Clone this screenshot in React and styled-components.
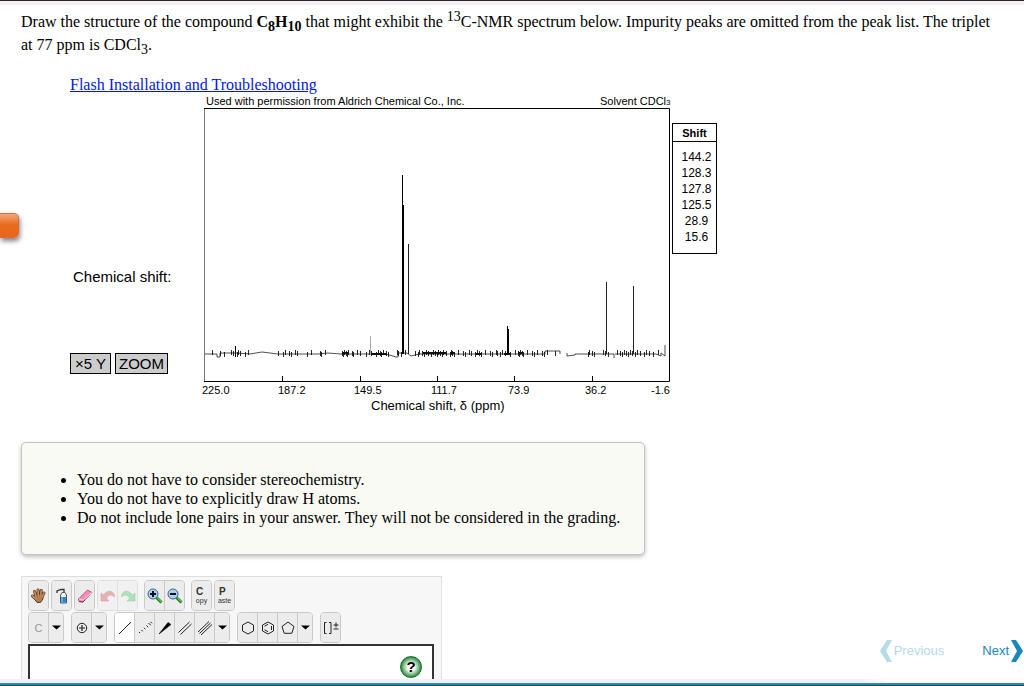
import React from 'react';
import styled, { createGlobalStyle } from 'styled-components';

const GlobalStyle = createGlobalStyle`
  * {
    box-sizing: border-box;
  }

  body {
    margin: 0;
    background-color: #fff;
    color: #000;
    font-family: 'Liberation Serif', 'Times New Roman', serif;
    font-size: 16px;
  }

  button {
    font-family: 'Liberation Sans', Arial, sans-serif;
    padding: 0;
  }
`;

const Page = styled.div`
  height: 100vh;
  display: flex;
  flex-direction: column;
  overflow: hidden;
  position: relative;
`;

const TopStrip = styled.div`
  flex: none;
  height: 5px;
  background-color: #f3eff3;
  border-top: 1px solid #2c262b;
`;

const BottomStrip = styled.div`
  flex: none;
  height: 7px;
  background: linear-gradient(90deg, #f1f1f1 84%, #fff 87%);
  border-bottom: 1px solid #3b3f42;

  &::after {
    content: '';
    display: block;
    margin-top: 4px;
    height: 2px;
    background-color: #1a8cc8;
  }
`;

const Main = styled.main`
  flex: 1;
  min-height: 0;
  display: flex;
  flex-direction: column;
  overflow: hidden;
`;

const Question = styled.p`
  margin: 5px 0 19px;
  padding: 0 20px 0 21px;
  line-height: 23px;

  sub,
  sup {
    font-size: 14px;
    line-height: 0;
  }
`;

const Applet = styled.section`
  padding-left: 70px;
`;

const HelpLink = styled.a`
  display: block;
  width: fit-content;
  color: #0019e6;
  line-height: 20px;
`;

const Spectrum = styled.div`
  display: flex;
  align-items: flex-start;
`;

const Controls = styled.div`
  width: 130px;
  flex: none;
  padding-top: 172px;
`;

const ControlsLabel = styled.div`
  font-family: 'Liberation Sans', Arial, sans-serif;
  font-size: 15px;
  line-height: 20px;
  padding-left: 3px;
  margin-bottom: 66px;
`;

const ControlsRow = styled.div`
  display: flex;
  gap: 4px;
`;

const GreyButton = styled.button`
  height: 21px;
  min-width: 41px;
  padding: 0 3px;
  font-size: 15px;
  line-height: 19px;
  color: #000;
  background-color: #ccc;
  border: 1px solid #000;
  border-radius: 0;
  white-space: nowrap;
`;

const Chart = styled.svg`
  display: block;
  flex: none;
  font-family: 'Liberation Sans', Arial, sans-serif;
  font-size: 11px;
`;

const ShiftTable = styled.table`
  width: 45px;
  margin-top: 28px;
  border: 1px solid #000;
  border-collapse: collapse;
  font-family: 'Liberation Sans', Arial, sans-serif;
  font-size: 12px;
  text-align: center;

  th {
    height: 18px;
    padding: 0;
    font-size: 11px;
    border-bottom: 1px solid #000;
  }

  td {
    padding: 0 0 0 4px;
    line-height: 16px;
  }

  tbody tr:first-child td {
    padding-top: 7px;
  }

  tbody tr:last-child td {
    padding-bottom: 8px;
  }
`;

const Notes = styled.ul`
  width: fit-content;
  margin: 27px 0 21px 21px;
  padding: 27px 24px 27px 55px;
  line-height: 19px;
  background-color: #f9faf4;
  border: 1px solid #c4c4c4;
  border-radius: 5px;
  box-shadow: 0 2px 4px rgba(0, 0, 0, 0.25);
`;

const BottomRow = styled.div`
  flex: 1;
  min-height: 0;
  display: flex;
  justify-content: space-between;
`;

const Sketcher = styled.section`
  width: 421px;
  margin-left: 21px;
  padding: 3px 7px 0 6px;
  display: flex;
  flex-direction: column;
  background-color: #f7f7f7;
  border: 1px solid #dedede;
  border-bottom: none;
`;

const Toolbar = styled.div`
  display: flex;
  gap: ${(props) => props.$gap};
  height: 31px;
  margin-bottom: 1px;
`;

const ToolSet = styled.div`
  display: flex;
  gap: 2px;
`;

const Group = styled.div`
  display: flex;
  border: 1px solid #c9c9c9;
  border-radius: 4px;
  overflow: hidden;
  opacity: ${(props) => (props.$faded ? 0.5 : 1)};
`;

const Tool = styled.button`
  width: ${(props) => (props.$arrow ? '15px' : '20px')};
  display: flex;
  flex-direction: column;
  align-items: center;
  justify-content: center;
  color: ${(props) => (props.$muted ? '#999' : '#333')};
  background-color: ${(props) => (props.$active ? '#fff' : '#ececec')};
  border: none;
  border-left: 1px solid #c9c9c9;
  font-size: 11px;

  &:first-child {
    width: 19px;
    border-left: none;
  }

  svg {
    display: block;
    flex: none;
  }
`;

const ToolInitial = styled.b`
  font-size: 10px;
  line-height: 10px;
  align-self: flex-start;
  padding-left: 4px;
`;

const ToolRest = styled.span`
  font-size: 7px;
  line-height: 7px;
`;

const Canvas = styled.div`
  flex: 1;
  display: flex;
  justify-content: flex-end;
  align-items: flex-start;
  padding: 10px 10px 0;
  background-color: #fff;
  border: 2px solid #333;
  border-bottom: none;
  width: 406px;
`;

const HelpButton = styled.button`
  width: 22px;
  height: 22px;
  flex: none;
  border: 1px solid #17702a;
  border-radius: 50%;
  background: radial-gradient(circle, #fff 25%, #8fc59a 50%, #1d7f31 75%);
  color: #000;
  font-size: 15px;
  font-weight: bold;
  line-height: 20px;
`;

const Pager = styled.nav`
  align-self: flex-end;
  display: flex;
  gap: 38px;
  padding: 0 1px 17px 0;
`;

const PagerButton = styled.button`
  display: flex;
  align-items: center;
  gap: 1px;
  color: #1787be;
  background: none;
  border: none;
  font-size: 13px;
  line-height: 22px;

  &:disabled {
    color: #b5daea;
  }
`;

const DrawerTab = styled.button`
  position: absolute;
  left: 0;
  top: 213px;
  width: 19px;
  height: 25px;
  border: 1px solid #dc6a41;
  border-left: none;
  border-radius: 0 5px 5px 0;
  background: linear-gradient(#f3a878, #ea6c1f 45%, #e9651a);
  box-shadow: 1px 3px 5px rgba(0, 0, 0, 0.5);
`;

const shifts = ['144.2', '128.3', '127.8', '125.5', '28.9', '15.6'];

const notes = [
  'You do not have to consider stereochemistry.',
  'You do not have to explicitly draw H atoms.',
  'Do not include lone pairs in your answer. They will not be considered in the grading.',
];

const ticks = [82, 160, 237, 314, 392];

const axisLabels = [
  [2, '225.0'],
  [78, '187.2'],
  [154, '149.5'],
  [231, '111.7'],
  [308, '73.9'],
  [385, '36.2'],
  [451, '-1.6'],
];

// x, top and stroke of every real peak
const peaks = [
  [170.5, 241, '#aaa'],
  [202.5, 80, '#000'],
  [203.5, 110, '#000'],
  [208.5, 149, '#222'],
  [307.5, 231, '#000'],
  [308.5, 234, '#000'],
  [406.5, 187, '#222'],
  [433.5, 191, '#222'],
];

// x positions of the noise on the baseline
const noise = [
  12, 20, 24, 31, 33, 37, 38, 40, 45, 48, 78, 83, 85, 89, 91, 95, 97, 107, 111, 120, 121, 125,
  142, 143, 144, 146, 147, 148, 152, 153, 157, 160, 166, 169, 171, 176, 178, 180, 181, 183, 186, 188,
  197, 198, 201, 205, 215, 218, 219, 222, 224, 226, 228, 231, 233, 235, 237, 238, 240, 242, 243, 246,
  250, 251, 252, 254, 258, 263, 265, 269, 271, 275, 277, 279, 281, 285, 290, 292, 296, 297, 300, 302,
  305, 310, 315, 318, 319, 320, 322, 323, 327, 332, 334, 337, 342, 344, 347, 355, 388, 389, 392, 394,
  403, 405, 408, 417, 420, 422, 424, 426, 428, 430, 432, 435, 437, 440, 444, 446, 449, 453, 458,
];

const noisePath = noise
  .map((x, i) => `M${x + 0.5} ${255 + (i % 3)}V${260 + ((i * 7) % 3)}`)
  .join('');

// short runs where the noise merges into a thick band
const denseNoise = 'M142 258H149M171 259H187M223 258H246M250 258H255M276 259H282M304 259H311M318 258H323';

const baseline =
  'M5 259H17V262H20V258H36L50 259L62 257L78 259H118L128 258L141 259H186L196 262H198V258H207L211 261L219 259H345V256H360V259M367 258V261L375 260V259H414V263M415 259H456L461 261V258L465 261V250';

const NmrChart = () => (
  <Chart width="472" height="320" viewBox="0 0 472 320" role="img" aria-label="13C-NMR spectrum">
    <text x="6" y="10">
      Used with permission from Aldrich Chemical Co., Inc.
    </text>
    <text x="400" y="10">
      Solvent CDCl<tspan fontSize="8">3</tspan>
    </text>
    <path d="M4.5 13V286" stroke="#777" />
    <path d="M4 13.5H469.5V286.5H4" fill="none" stroke="#000" />
    {ticks.map((x) => (
      <path key={x} d={`M${x + 0.5} 281V286`} stroke="#000" />
    ))}
    <path d={baseline} fill="none" stroke="#222" strokeWidth="0.8" />
    <path d={noisePath} stroke="#111" strokeWidth="0.9" />
    <path d={denseNoise} stroke="#111" strokeWidth="2" />
    <path d="M35.5 251V262" stroke="#000" />
    {peaks.map(([x, top, stroke]) => (
      <path key={x} d={`M${x} ${top}V259`} stroke={stroke} />
    ))}
    {axisLabels.map(([x, label]) => (
      <text key={label} x={x} y="299">
        {label}
      </text>
    ))}
    <text x="171" y="315" fontSize="13">
      Chemical shift, δ (ppm)
    </text>
  </Chart>
);

const Icon = ({ children, size = 18 }) => (
  <svg width={size} height={size} viewBox="0 0 18 18" fill="none" stroke="#222" aria-hidden="true">
    {children}
  </svg>
);

const Hand = () => (
  <Icon>
    <g stroke="#5f3d25" strokeWidth="3" strokeLinecap="round">
      <path d="M6 9L4.5 4.5M8.3 8.5L8 3M10.5 8.5L11.3 3.5M12 10L14 6M6 12L2.5 9" />
    </g>
    <path d="M5 8L12.5 8L13 12L10.5 15.5H7L4.5 12Z" fill="#b57b50" stroke="#5f3d25" />
    <g stroke="#c28a5e" strokeWidth="1.7" strokeLinecap="round">
      <path d="M6 9L4.5 4.5M8.3 8.5L8 3M10.5 8.5L11.3 3.5M12 10L14 6M6 12L2.5 9" />
    </g>
  </Icon>
);

const Bottle = () => (
  <Icon>
    <path d="M4 6V4L8 2.5H11V6" stroke="#333" strokeWidth="1.3" />
    <path d="M9 5.5H12L13.5 8V16H7.5V8Z" fill="#edf5fa" stroke="#555" />
    <path d="M8 10H13V15.5H8Z" fill="#2789cb" stroke="none" />
    <path d="M9 10.5V15" stroke="#8ed2ff" />
  </Icon>
);

const Eraser = () => (
  <Icon>
    <path d="M2.5 12L11.5 3L16 5.5L7 15L3 14.5Z" fill="#f58fb7" stroke="#b7557d" />
    <path d="M3 12L7 13L16 5.5" stroke="#ffd1e3" />
    <path d="M3 14.5L7 15L9 13" stroke="#733b50" />
  </Icon>
);

const Undo = () => (
  <Icon>
    <path d="M2 6V14H10L7.5 11.5C9 7.5 12.5 7 15.5 10C15.5 4 9 1.5 4.5 8Z" fill="#d86a69" stroke="#b56362" strokeWidth="0.7" />
  </Icon>
);

const Redo = () => (
  <Icon>
    <path d="M16 6V14H8L10.5 11.5C9 7.5 5.5 7 2.5 10C2.5 4 9 1.5 13.5 8Z" fill="#62cf78" stroke="#58a968" strokeWidth="0.7" />
  </Icon>
);

const Magnifier = ({ plus }) => (
  <Icon>
    <path d="M10.5 10.5L15.5 15.5" stroke="#1f701b" strokeWidth="3" />
    <path d="M11 10.5L15.5 15" stroke="#62c64b" strokeWidth="1.3" />
    <circle cx="7" cy="7" r="5" fill="#a8d3f4" stroke="#426078" />
    <path d={plus ? 'M4 7H10M7 4V10' : 'M4 7H10'} stroke="#000c20" strokeWidth="2" />
  </Icon>
);

const Caret = () => (
  <svg width="9" height="5" viewBox="0 0 9 5" aria-hidden="true">
    <path d="M0 0.5H9L4.5 4.5Z" fill="#000" />
  </svg>
);

const Plus = () => (
  <Icon>
    <circle cx="9" cy="9" r="4.7" />
    <path d="M6 9H12M9 6V12" strokeWidth="1.2" />
  </Icon>
);

const Single = () => (
  <Icon>
    <path d="M3 15L15 3" />
  </Icon>
);

const Hashed = () => (
  <Icon>
    <path d="M3 13L4 14M5.5 11L6.7 12.3M8 8.8L9.4 10.2M10.5 6.5L12.2 8.2M12.5 4L14.8 6.3M14.5 2.8L16 4.3" />
  </Icon>
);

const Wedge = () => (
  <Icon>
    <path d="M3 15L12 3.5L15 5.5Z" fill="#000" stroke="#000" strokeWidth="0.6" />
  </Icon>
);

const Double = () => (
  <Icon>
    <path d="M2.5 13.5L13.5 3M4.5 15.5L15.5 5" />
  </Icon>
);

const Triple = () => (
  <Icon>
    <path d="M2 13L13 2.5M3.5 14.5L14.5 4M5 16L16 5.5" />
  </Icon>
);

const Hexagon = () => (
  <Icon>
    <path d="M9 3L14.5 6V12L9 15L3.5 12V6Z" />
  </Icon>
);

const Benzene = () => (
  <Icon>
    <path d="M9 3L14.5 6V12L9 15L3.5 12V6Z" />
    <path d="M9 5.3L5.5 7.2M5.5 10.8L9 12.7M12.5 7V11" />
  </Icon>
);

const Pentagon = () => (
  <Icon>
    <path d="M9 3L15 7.5L12.8 14.3H5.2L3 7.5Z" />
  </Icon>
);

const Charge = () => (
  <Icon>
    <path d="M4.5 3.5H2.5V14.5H4.5M7 3.5H9V14.5H7M11.5 6H16.5M14 3.5V8.5M11.5 10H16.5" />
  </Icon>
);

const Chevron = ({ left }) => (
  <svg width="13" height="22" viewBox="0 0 13 22" fill="currentColor" aria-hidden="true">
    <path d={left ? 'M12 0H7L0 11L7 22H12L6 11Z' : 'M1 0H6L13 11L6 22H1L7 11Z'} />
  </svg>
);

const More = ({ label }) => (
  <Tool $arrow aria-label={label}>
    <Caret />
  </Tool>
);

const App = () => {
  return (
    <Page>
      <GlobalStyle />
      <TopStrip />
      <Main>
        <Question>
          Draw the structure of the compound{' '}
          <b>
            C<sub>8</sub>H<sub>10</sub>
          </b>{' '}
          that might exhibit the <sup>13</sup>C-NMR spectrum below. Impurity peaks are omitted from
          the peak list. The triplet at 77 ppm is CDCl<sub>3</sub>.
        </Question>

        <Applet>
          <HelpLink href="#flash">Flash Installation and Troubleshooting</HelpLink>
          <Spectrum>
            <Controls>
              <ControlsLabel>Chemical shift:</ControlsLabel>
              <ControlsRow>
                <GreyButton>×5 Y</GreyButton>
                <GreyButton>ZOOM</GreyButton>
              </ControlsRow>
            </Controls>
            <NmrChart />
            <ShiftTable>
              <thead>
                <tr>
                  <th>Shift</th>
                </tr>
              </thead>
              <tbody>
                {shifts.map((s) => (
                  <tr key={s}>
                    <td>{s}</td>
                  </tr>
                ))}
              </tbody>
            </ShiftTable>
          </Spectrum>
        </Applet>

        <Notes>
          {notes.map((n) => (
            <li key={n}>{n}</li>
          ))}
        </Notes>

        <BottomRow>
          <Sketcher aria-label="Structure editor">
            <Toolbar $gap="6px">
              <ToolSet>
                <Group>
                  <Tool aria-label="Move"><Hand /></Tool>
                </Group>
                <Group>
                  <Tool aria-label="Clear"><Bottle /></Tool>
                </Group>
                <Group>
                  <Tool aria-label="Erase"><Eraser /></Tool>
                </Group>
                <Group $faded>
                  <Tool aria-label="Undo"><Undo /></Tool>
                  <Tool aria-label="Redo"><Redo /></Tool>
                </Group>
              </ToolSet>
              <Group>
                <Tool aria-label="Zoom in"><Magnifier plus /></Tool>
                <Tool aria-label="Zoom out"><Magnifier /></Tool>
              </Group>
              <ToolSet>
                <Group>
                  <Tool>
                    <ToolInitial>C</ToolInitial>
                    <ToolRest>opy</ToolRest>
                  </Tool>
                </Group>
                <Group>
                  <Tool>
                    <ToolInitial>P</ToolInitial>
                    <ToolRest>aste</ToolRest>
                  </Tool>
                </Group>
              </ToolSet>
            </Toolbar>
            <Toolbar $gap="7px">
              <Group>
                <Tool $muted>C</Tool>
                <More label="More elements" />
              </Group>
              <Group>
                <Tool aria-label="Charge"><Plus /></Tool>
                <More label="More charges" />
              </Group>
              <Group>
                <Tool $active aria-label="Single bond"><Single /></Tool>
                <Tool aria-label="Hashed bond"><Hashed /></Tool>
                <Tool aria-label="Wedge bond"><Wedge /></Tool>
                <Tool aria-label="Double bond"><Double /></Tool>
                <Tool aria-label="Triple bond"><Triple /></Tool>
                <More label="More bonds" />
              </Group>
              <Group>
                <Tool aria-label="Cyclohexane"><Hexagon /></Tool>
                <Tool aria-label="Benzene"><Benzene /></Tool>
                <Tool aria-label="Cyclopentane"><Pentagon /></Tool>
                <More label="More rings" />
              </Group>
              <Group>
                <Tool aria-label="Bracket"><Charge /></Tool>
              </Group>
            </Toolbar>
            <Canvas>
              <HelpButton>?</HelpButton>
            </Canvas>
          </Sketcher>

          <Pager>
            <PagerButton disabled>
              <Chevron left />
              Previous
            </PagerButton>
            <PagerButton>
              Next
              <Chevron />
            </PagerButton>
          </Pager>
        </BottomRow>
      </Main>
      <BottomStrip />
      <DrawerTab aria-label="Open drawer" />
    </Page>
  );
};

export default App;
